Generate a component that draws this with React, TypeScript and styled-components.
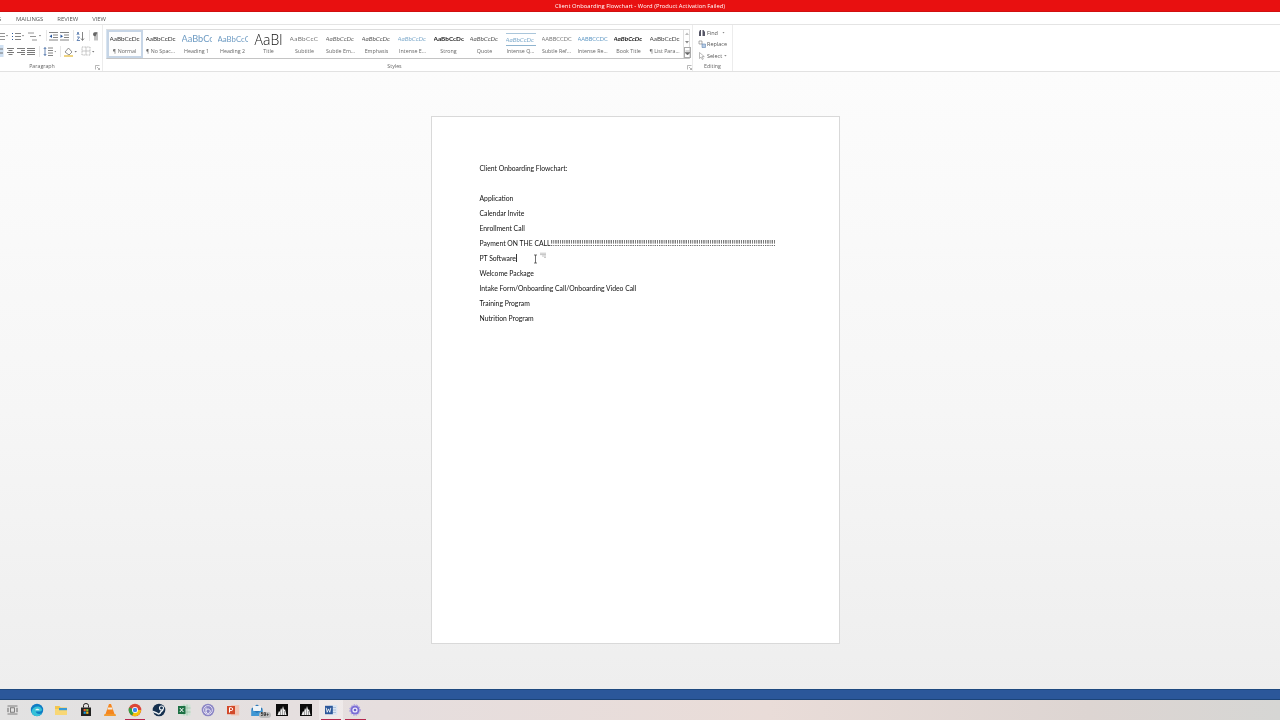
import React from "react";
import styled, { createGlobalStyle } from "styled-components";

const Global = createGlobalStyle`
  html, body { margin: 0; padding: 0; width: 1280px; height: 720px; overflow: hidden; background: #f4f4f4; }
  #root { width: 1280px; height: 720px; }
`;

const Screen = styled.div`
  width: 1280px; height: 720px; display: flex; flex-direction: column; overflow: hidden;
  font-family: "Open Sans", "Liberation Sans", sans-serif; color: #444;
  filter: blur(0.3px);
`;
const TitleBar = styled.div`
  height: 12px; flex: none; background: #e81010; color: #fff; font-size: 5.85px; line-height: 12px;
  text-align: center; border-bottom: 0.5px solid #d01010; box-sizing: border-box;
  white-space: nowrap;
`;
const Tabs = styled.div`
  height: 13px; flex: none; background: #fff; border-bottom: 1px solid #e4e4e4; box-sizing: border-box;
  display: flex; align-items: center; font-size: 5.9px; color: #555; gap: 14px; padding-top: 1px;
`;
const ClippedTab = styled.span`margin-left: -2px; width: 4px;`;
const Ribbon = styled.div`
  height: 47px; flex: none; background: #fff; border-bottom: 1px solid #e2e2e2; box-sizing: border-box;
  display: flex; 
`;
const Group = styled.div<{ $w: number }>`
  width: ${p => p.$w}px; flex: none; box-sizing: border-box; display: flex; flex-direction: column;
  border-right: 1px solid #ececec; position: relative;
`;
const GroupBody = styled.div`flex: 1; min-height: 0;`;
const GroupLabel = styled.div<{ $pr?: number }>`
  height: 8px; line-height: 7px; font-size: 5.3px; text-align: center; color: #666; flex: none;
  padding-right: ${p => p.$pr ?? 0}px;
`;
const Launcher = styled.svg<{ $r: number }>`position: absolute; right: ${p => p.$r}px; bottom: 1px;`;

const ParaBody = styled(GroupBody)`
  display: flex; flex-direction: column; padding-top: 4.5px; gap: 3.5px; overflow: hidden;
`;
const ParaRow = styled.div`display: flex; align-items: center; height: 12px;`;
const Ic = styled.svg<{ $ml?: number }>`flex: none; margin-left: ${p => p.$ml ?? 0}px;`;
const ParaSep = styled.span<{ $ml: number }>`
  flex: none; width: 1px; height: 11px; background: #e6e6e6; margin-left: ${p => p.$ml}px;
`;

const Gallery = styled.div`
  display: flex; height: 30px; margin: 3.5px 0 0 2.5px; width: 584px; flex: none; box-sizing: border-box;
  border: 1px solid #dcdcdc; border-bottom: 1px solid #c4c4c4; border-left-color: #d8e4f0;
`;
const StyleItem = styled.div<{ $on?: boolean }>`
  width: 36px; flex: none; box-sizing: border-box; text-align: center; overflow: hidden;
  display: flex; flex-direction: column; align-items: center;
  ${p => p.$on ? "outline: 2px solid #c6d5e6; outline-offset: -2px; background:#fdfdfd;" : ""}
`;
const Preview = styled.div<{ $c: string; $s: number; $w: number; $i?: boolean; $sp?: number; $u?: boolean }>`
  height: 17.5px; width: 30px; line-height: 18.5px; overflow: hidden; white-space: nowrap; display: flex; justify-content: flex-start;
  font-family: Lato, "Liberation Sans", sans-serif; color: ${p => p.$c}; font-size: ${p => p.$s}px;
  font-weight: ${p => p.$w}; font-style: ${p => p.$i ? "italic" : "normal"};
  letter-spacing: ${p => p.$sp ?? 0}px;
  ${p => p.$u ? "box-shadow: inset 0 1.5px 0 -0.8px #8fb4cf, inset 0 -2px 0 -1px #8fb4cf; height: 13.5px; line-height:13.5px; margin: 3px 0 1px;" : ""}
`;
const TitlePreview = styled.div`
  height: 17.5px; line-height: 19px; width: 30px; overflow: hidden; white-space: nowrap; text-align: center;
  font-family: "Open Sans", sans-serif; font-size: 14px; font-weight: 300; color: #111;
`;
const StyleName = styled.div`font-size: 5.3px; line-height: 9px; color: #666; white-space: nowrap;`;
const Scroller = styled.div`
  flex: 1; display: flex; flex-direction: column; border-left: 1px solid #e0e0e0;
`;
const ScrollBtn = styled.div<{ $b?: boolean }>`
  flex: 1; display: flex; align-items: center; justify-content: center; color: #888;
  ${p => p.$b ? "border: 0.5px solid #aaa;" : ""}
`;
const EditBody = styled(GroupBody)`
  padding: 2px 0 0 4.5px; display: flex; flex-direction: column; gap: 0;
`;
const EditRow = styled.div`
  display: flex; align-items: center; gap: 1.5px; height: 11.5px; font-size: 5.5px; color: #555;
`;
const Workspace = styled.div`
  flex: 1; min-height: 0; padding: 44px 0 0 431px;
  background: linear-gradient(180deg, #fcfcfc 0%, #f6f6f6 55%, #eeeeee 100%);
`;
const Page = styled.div`
  width: 409px; height: 528px; box-sizing: border-box; background: #fff; border: 1px solid #d9d9d9;
  padding: 44px 0 0 47.5px; position: relative;
  font-family: Lato, "Liberation Sans", sans-serif; font-size: 6.8px; color: #111;
`;
const Line = styled.div`height: 15px; line-height: 15px; white-space: nowrap;`;
const Caret = styled.span`display: inline-block; width: 0.6px; height: 8px; background: #333; vertical-align: -1px;`;
const Pointer = styled.svg`position: absolute; left: 101px; top: 135px;`;
const StatusBar = styled.div`
  height: 11px; flex: none; background: #2b579a; border-top: 1px solid #1f4a80; border-bottom: 1px solid #1c4478;
  box-sizing: border-box;
`;
const Taskbar = styled.div`
  height: 20px; flex: none; display: flex;
  background: linear-gradient(90deg, #e2e2e2 0%, #e6dede 30%, #e9dcd8 60%, #ddd5d2 85%, #d6d6d4 100%);
`;
const TaskItem = styled.div<{ $run?: boolean; $act?: boolean }>`
  width: 24.5px; height: 20px; flex: none; box-sizing: border-box; display: flex; align-items: center; justify-content: center;
  position: relative;
  ${p => p.$act ? "background: rgba(255,255,255,.35);" : ""}
  ${p => p.$run ? "&::after { content: ''; position: absolute; left: 2px; right: 2px; bottom: 0; height: 1.5px; background: #b5274d; }" : ""}
`;
const Badge = styled.span`
  position: absolute; right: -1px; bottom: 2px; font-family: "Liberation Sans", sans-serif; font-size: 4.8px; font-weight: 700; line-height: 6px;
  background: #bdbdbd; color: #222; border-radius: 3px; padding: 0 1.5px;
`;

const styles: { n: string; t: string; c: string; s: number; w: number; i?: boolean; sp?: number; u?: boolean }[] = [
  { n: "¶ Normal", t: "AaBbCcDc", c: "#333", s: 6.4, w: 400 },
  { n: "¶ No Spac...", t: "AaBbCcDc", c: "#333", s: 6.4, w: 400 },
  { n: "Heading 1", t: "AaBbCc", c: "#6d9bc3", s: 9.2, w: 400 },
  { n: "Heading 2", t: "AaBbCcC", c: "#6d9bc3", s: 7.8, w: 400 },
  { n: "Title", t: "", c: "#111", s: 14, w: 300 },
  { n: "Subtitle", t: "AaBbCcC", c: "#777", s: 6.4, w: 400, sp: 0.35 },
  { n: "Subtle Em...", t: "AaBbCcDc", c: "#666", s: 6.4, w: 400, i: true },
  { n: "Emphasis", t: "AaBbCcDc", c: "#555", s: 6.4, w: 400, i: true },
  { n: "Intense E...", t: "AaBbCcDc", c: "#7fabcc", s: 6.4, w: 400, i: true },
  { n: "Strong", t: "AaBbCcDc", c: "#222", s: 6.4, w: 700 },
  { n: "Quote", t: "AaBbCcDc", c: "#555", s: 6.4, w: 400, i: true },
  { n: "Intense Q...", t: "AaBbCcDc", c: "#7fabcc", s: 6.4, w: 400, i: true, u: true },
  { n: "Subtle Ref...", t: "AABBCCDC", c: "#777", s: 5.6, w: 400 },
  { n: "Intense Re...", t: "AABBCCDC", c: "#5d97c4", s: 5.6, w: 400 },
  { n: "Book Title", t: "AaBbCcDc", c: "#222", s: 6.4, w: 700, i: true },
  { n: "¶ List Para...", t: "AaBbCcDc", c: "#444", s: 6.4, w: 400 },
];

const Lines = ({ w, ys, c = "#6a6a6a", x = 0 }: { w: number; ys: [number, number][]; c?: string; x?: number }) => (
  <>
    {ys.map(([y, l], i) => <line key={i} x1={x + (w - l) / 2} x2={x + (w + l) / 2} y1={y} y2={y} stroke={c} strokeWidth="0.9" />)}
  </>
);
const Caretd = ({ x }: { x: number }) => <path d={`M${x} 5l2 0-1 1.5z`} fill="#777" />;

const ParagraphTop = () => (
  <ParaRow>
    <Ic width="8" height="12"><path d="M0 3.5h5M0 6.5h5M0 9.5h5" stroke="#888" strokeWidth=".9" /><Caretd x={6} /></Ic>
    <Ic $ml={3} width="14" height="12"><path d="M1 3.5h1M1 6.5h1M1 9.5h1" stroke="#2b579a" strokeWidth="1" /><path d="M4 3.5h6M4 6.5h6M4 9.5h6" stroke="#777" strokeWidth=".9" /><Caretd x={11} /></Ic>
    <Ic $ml={3} width="14" height="12"><path d="M0 3h6M2 6.5h6M4 10h5" stroke="#8a8a8a" strokeWidth=".9" /><Caretd x={11} /></Ic>
    <ParaSep $ml={4} />
    <Ic $ml={2} width="10" height="12"><path d="M0 2.5h9M4 5h5M4 7.5h5M0 10h9" stroke="#777" strokeWidth=".9" /><path d="M3 4.5L0.5 6.2 3 8z" fill="#2b579a" /></Ic>
    <Ic $ml={1} width="10" height="12"><path d="M0 2.5h9M4 5h5M4 7.5h5M0 10h9" stroke="#777" strokeWidth=".9" /><path d="M.5 4.5L3 6.2.5 8z" fill="#2b579a" /></Ic>
    <ParaSep $ml={3} />
    <Ic $ml={2} width="9" height="12"><path d="M6.5 2v8M5 8.5l1.5 2 1.5-2" stroke="#666" strokeWidth=".8" fill="none" /><path d="M1 5l1-3 1 3M1 7h2.5L1 10.5h3" stroke="#2b579a" strokeWidth=".7" fill="none" /></Ic>
    <ParaSep $ml={4} />
    <Ic $ml={2} width="6" height="12"><path d="M3 2.5v8M5 2.5v8" stroke="#666" strokeWidth=".8" /><path d="M5.5 2.2H3a2 2 0 0 0 0 4h.5z" fill="#666" /></Ic>
  </ParaRow>
);
const ParagraphBottom = () => (
  <ParaRow>
    <Ic width="4" height="12"><rect width="3.5" height="12" fill="#cfe0f2" /><path d="M0 4h3M0 8h3" stroke="#6a6a6a" strokeWidth=".9" /></Ic>
    <Ic $ml={3} width="7" height="12"><Lines w={7} ys={[[3.5, 7], [5.5, 4], [7.5, 7], [9.5, 4]]} /></Ic>
    <Ic $ml={3} width="8" height="12"><path d="M0 3.5h8M4 5.5h4M0 7.5h8M4 9.5h4" stroke="#6a6a6a" strokeWidth=".9" /></Ic>
    <Ic $ml={2} width="8" height="12"><path d="M0 3.5h8M0 5.5h8M0 7.5h8M0 9.5h8" stroke="#6a6a6a" strokeWidth=".9" /></Ic>
    <ParaSep $ml={4} />
    <Ic $ml={3} width="13" height="12"><path d="M5 3h5M5 5.5h5M5 8h5M5 10.5h5" stroke="#777" strokeWidth=".9" /><path d="M2 2.5v8M.8 4L2 2.5 3.2 4M.8 9L2 10.5 3.2 9" stroke="#2b579a" strokeWidth=".7" fill="none" /><path d="M11.5 6h1.5l-.8 1.2z" fill="#777" /></Ic>
    <ParaSep $ml={4} />
    <Ic $ml={2} width="15" height="12"><path d="M2 7l3.5-4 3.5 4-3 3z" fill="none" stroke="#777" strokeWidth=".8" /><path d="M1 11h9" stroke="#e7c14d" strokeWidth="1.4" /><path d="M11.5 6h2.4l-1.2 1.4z" fill="#777" /></Ic>
    <Ic $ml={3} width="14" height="12"><rect x="1" y="2" width="8" height="8" fill="none" stroke="#999" strokeWidth=".7" strokeDasharray="1 .6" /><path d="M5 2v8M1 6h8" stroke="#aaa" strokeWidth=".6" /><path d="M11 6h2.4l-1.2 1.4z" fill="#777" /></Ic>
  </ParaRow>
);

const task = (body: React.ReactNode) => <svg width="14" height="14" viewBox="0 0 14 14">{body}</svg>;
const Mountain = () => (
  <svg width="12" height="12" viewBox="0 0 12 12">
    <rect width="12" height="12" fill="#0b0b0b" />
    <path d="M1.5 11L3 7l1 1 1-4 1 2 1-4 1.2 4 .8-1 1.5 6z" fill="#eeeeee" />
    <path d="M4.5 11V7.5M6.5 11V5.5M8.5 11V7" stroke="#555" strokeWidth=".5" />
  </svg>
);

const icons: { el: React.ReactNode; run?: boolean; act?: boolean; badge?: string }[] = [
  { el: <svg width="11" height="10" viewBox="0 0 11 10"><path d="M.5 1h10M.5 9h10" stroke="#666" strokeWidth=".8" /><rect x="3.5" y="2.8" width="4" height="4.4" fill="none" stroke="#666" strokeWidth=".8" /><path d="M1 2.8v4.4M10 2.8v4.4" stroke="#666" /></svg> },
  { el: task(<><circle cx="7" cy="7" r="6.2" fill="#0f7cc4" /><path d="M1.5 8.5C2.5 3.5 9 2 11.5 5.5 12.6 7 12 8.5 9.5 8.5H5.8c.3 2.4 3.4 3.3 6.2 1.8C10 14 4 14 2 10.5z" fill="#35c1d8" /><path d="M5.2 7.2c.6-2 3.7-2 4.4 0z" fill="#eaf6f6" /></>) },
  { el: task(<><path d="M1 3h4.5l1.2 1.5H13V12H1z" fill="#f3c64d" /><rect x="1" y="6" width="12" height="6" fill="#f8d775" /><rect x="5" y="5" width="8" height="2.2" fill="#3a9bd5" /></>) },
  { el: task(<><path d="M2 4.5h10V13H2z" fill="#222" /><path d="M4.5 4.5V2.5a2.5 2 0 0 1 5 0v2" stroke="#222" fill="none" /><rect x="4.6" y="6" width="2.2" height="2.2" fill="#e95f33" /><rect x="7.2" y="6" width="2.2" height="2.2" fill="#83b836" /><rect x="4.6" y="8.6" width="2.2" height="2.2" fill="#1aa0e0" /><rect x="7.2" y="8.6" width="2.2" height="2.2" fill="#f6bb1e" /></>) },
  { el: task(<><path d="M6 1h2l3.5 10h-9z" fill="#f5861f" /><path d="M5 4.5h4l.5 2h-5z" fill="#f4ece0" /><path d="M1.5 11h11L13 13H1z" fill="#f29a2e" /></>) },
  { run: true, el: task(<><circle cx="7" cy="7" r="6.3" fill="#db4437" /><path d="M7 7L13 7A6.3 6.3 0 0 1 4 12.6z" fill="#f4c20d" /><path d="M7 7L4 12.6A6.3 6.3 0 0 1 1.2 4.5z" fill="#2f9e44" /><circle cx="7" cy="7" r="3" fill="#fff" /><circle cx="7" cy="7" r="2.2" fill="#4285f4" /></>) },
  { el: task(<><circle cx="7" cy="7" r="6.3" fill="#16304f" /><path d="M1 8.5l4 1.6a2 2 0 0 0 3.6-1L11 7" stroke="#f0f3f6" strokeWidth="1.4" fill="none" /><circle cx="9.5" cy="5" r="2" fill="none" stroke="#f0f3f6" strokeWidth="1.1" /></>) },
  { el: task(<><rect x="4" y="1.5" width="9.5" height="11" fill="#cfe3d6" /><path d="M7 1.5v11M10 1.5v11M4 5h9.5M4 9h9.5" stroke="#7fb08f" strokeWidth=".5" /><rect x="1" y="3" width="7.5" height="8" fill="#1d7044" /><path d="M2.8 5l3.6 4M6.4 5l-3.6 4" stroke="#fff" strokeWidth="1" /></>) },
  { el: task(<><circle cx="7" cy="7" r="6.3" fill="#8b85c4" /><circle cx="7" cy="7" r="4.4" fill="none" stroke="#ded9f2" strokeWidth="1" /><path d="M5 10V4.5M5 7.5a2.2 2.2 0 1 1 0 1.5" stroke="#f4f3fb" strokeWidth="1" fill="none" /></>) },
  { el: task(<><rect x="5" y="2" width="8.2" height="10.5" fill="#f0c5b5" /><rect x="1" y="3" width="8" height="8.2" fill="#d2492a" /><path d="M3.5 9.6V4.7h1.7a1.4 1.4 0 0 1 0 2.9H3.5" stroke="#fff" strokeWidth="1" fill="none" /></>) },
  { badge: "59+", el: task(<><path d="M1.5 5.5L7 1.5l5.5 4V13h-11z" fill="#2a78b8" /><rect x="3" y="3" width="8" height="5" fill="#eef3f7" /><path d="M1.5 6.5L7 10l5.5-3.5V13h-11z" fill="#3f97d4" /></>) },
  { el: <Mountain /> },
  { el: <Mountain /> },
  { run: true, act: true, el: task(<><rect x="5" y="2" width="8.2" height="10" fill="#dce6f2" /><path d="M7 4.5h5M7 7h5M7 9.5h5" stroke="#8fa9cc" strokeWidth=".6" /><rect x="1" y="2.8" width="7.8" height="8.4" fill="#2b579a" /><path d="M2.2 4.8l1 4.5 1.3-3.4 1.3 3.4 1-4.5" stroke="#fff" strokeWidth=".8" fill="none" /></>) },
  { run: true, el: task(<><circle cx="7" cy="7" r="4.6" fill="#7a6cd6" /><circle cx="7" cy="7" r="2.6" fill="#efeefb" /><circle cx="7" cy="7" r="1.3" fill="#6a5cc8" /><circle cx="7" cy="7" r="5.2" fill="none" stroke="#9a8fe2" strokeWidth="1" strokeDasharray="1.6 1.2" /></>) },
];

const docLines = [
  "Client Onboarding Flowchart:",
  "\u00a0",
  "Application",
  "Calendar Invite",
  "Enrollment Call",
  "Payment ON THE CALL" + "!".repeat(123),
];
const docRest = ["Welcome Package", "Intake Form/Onboarding Call/Onboarding Video Call", "Training Program", "Nutrition Program"];

export default function App() {
  return (
    <Screen>
      <Global />
      <TitleBar>Client Onboarding Flowchart -  Word (Product Activation Failed)</TitleBar>
      <Tabs>
        <ClippedTab>S</ClippedTab>
        <span>MAILINGS</span>
        <span>REVIEW</span>
        <span>VIEW</span>
      </Tabs>
      <Ribbon>
        <Group $w={103}>
          <ParaBody>
            <ParagraphTop />
            <ParagraphBottom />
          </ParaBody>
          <GroupLabel $pr={18}>Paragraph</GroupLabel>
          <Launcher $r={2} width="5" height="5"><path d="M.5 4.5v-4h4M2 2l2.5 2.5M4.5 3v1.5H3" stroke="#888" strokeWidth=".6" fill="none" /></Launcher>
        </Group>
        <Group $w={590}>
          <GroupBody>
            <Gallery>
              {styles.map(s => (
                <StyleItem key={s.n} $on={s.n === "¶ Normal"}>
                  {s.n === "Title"
                    ? <TitlePreview>AaBl</TitlePreview>
                    : <Preview $c={s.c} $s={s.s} $w={s.w} $i={s.i} $sp={s.sp} $u={s.u}>{s.t}</Preview>}
                  <StyleName>{s.n}</StyleName>
                </StyleItem>
              ))}
              <Scroller>
                <ScrollBtn><svg width="4" height="3"><path d="M0 3l2-2.5L4 3z" fill="#bbb" /></svg></ScrollBtn>
                <ScrollBtn><svg width="4" height="3"><path d="M0 0l2 2.5L4 0z" fill="#888" /></svg></ScrollBtn>
                <ScrollBtn $b><svg width="5" height="5"><path d="M.5 1h4M0 2.5l2.5 2.5L5 2.5z" stroke="#666" strokeWidth=".5" fill="#666" /></svg></ScrollBtn>
              </Scroller>
            </Gallery>
          </GroupBody>
          <GroupLabel $pr={6}>Styles</GroupLabel>
          <Launcher $r={0} width="5" height="5"><path d="M.5 4.5v-4h4M2 2l2.5 2.5M4.5 3v1.5H3" stroke="#888" strokeWidth=".6" fill="none" /></Launcher>
        </Group>
        <Group $w={40}>
          <EditBody>
            <EditRow>
              <svg width="8" height="8"><path d="M1 7V3l1-2h1v6zM4.5 7V1h1l1.5 2v4z" fill="#556" /></svg>
              <span>Find</span>
              <svg width="6" height="4"><path d="M3.5 1h2L4.5 2.4z" fill="#888" /></svg>
            </EditRow>
            <EditRow>
              <svg width="8" height="8"><path d="M1 1h3v3H1z" fill="none" stroke="#777" strokeWidth=".6" /><path d="M4 4h3.5v3.5H4z" fill="#b9cde4" stroke="#4d77aa" strokeWidth=".5" /></svg>
              <span>Replace</span>
            </EditRow>
            <EditRow>
              <svg width="8" height="8"><path d="M1.5 .5v6l1.6-1.4 1.2 2.4 1-.5L4.2 4.6h2.1z" fill="#fff" stroke="#777" strokeWidth=".5" /></svg>
              <span>Select</span>
              <svg width="3" height="4"><path d="M.2 1h2.4L1.4 2.4z" fill="#888" /></svg>
            </EditRow>
          </EditBody>
          <GroupLabel>Editing</GroupLabel>
        </Group>
      </Ribbon>
      <Workspace>
        <Page>
          {docLines.map((l, i) => <Line key={i}>{l}</Line>)}
          <Line>PT Software<Caret /></Line>
          {docRest.map(l => <Line key={l}>{l}</Line>)}
          <Pointer width="14" height="12" viewBox="0 0 14 12">
            <path d="M1 3h3M1 11h3M2.5 3v8" stroke="#333" strokeWidth=".7" fill="none" />
            <path d="M7 1.2h6M7 2.6h6M9 4h4M11 5.4h2" stroke="#aaa" strokeWidth=".7" />
          </Pointer>
        </Page>
      </Workspace>
      <StatusBar />
      <Taskbar>
        {icons.map((ic, i) => (
          <TaskItem key={i} $run={ic.run} $act={ic.act}>
            {ic.el}
            {ic.badge ? <Badge>{ic.badge}</Badge> : null}
          </TaskItem>
        ))}
      </Taskbar>
    </Screen>
  );
}
